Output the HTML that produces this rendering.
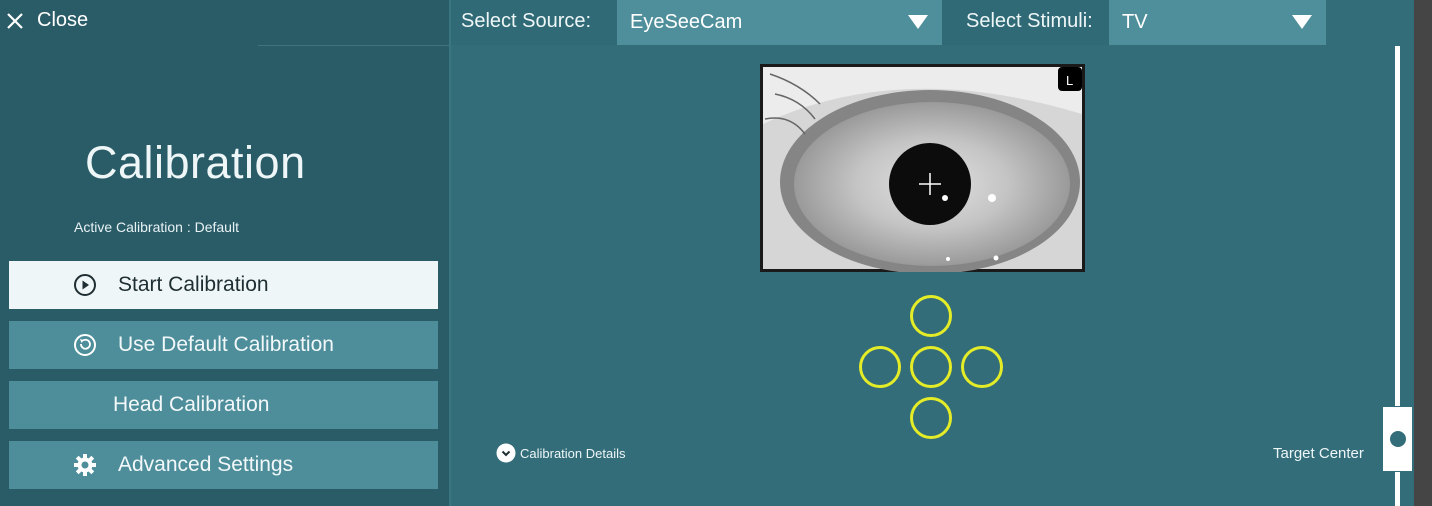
<!DOCTYPE html>
<html><head><meta charset="utf-8"><style>
*{margin:0;padding:0;box-sizing:border-box}
body{width:1432px;height:506px;overflow:hidden;background:#336d79;font-family:"Liberation Sans",sans-serif;position:relative;color:#fff}
.a{position:absolute}
.btn{position:absolute;left:9px;width:429px;height:48px;background:#4e8e9b;font-size:21px;color:#f2f8f9;line-height:48px}
.btn span{position:absolute;left:109px}
.btn svg{position:absolute;left:64px;top:12px}
.c{position:absolute;width:42px;height:42px;border:3px solid #e4ec28;border-radius:50%}
</style></head><body>
<div class="a" style="left:0;top:0;width:449px;height:506px;background:#2a5c68"></div>
<div class="a" style="left:449px;top:0;width:2px;height:506px;background:#3a7682"></div>
<div class="a" style="left:258px;top:45px;width:192px;height:1px;background:#3d7480"></div>
<svg class="a" style="left:7px;top:13px" width="16" height="16"><path d="M1 1L15 15M15 1L1 15" stroke="#fff" stroke-width="2.2"/></svg>
<div class="a" style="left:37px;top:9px;font-size:20px">Close</div>
<div class="a" style="left:85px;top:137px;font-size:45px;font-weight:300;color:#eef6f7;letter-spacing:0.5px">Calibration</div>
<div class="a" style="left:74px;top:219px;font-size:14px;color:#e8f2f4">Active Calibration : Default</div>
<div class="btn" style="top:261px;background:#eef6f7;color:#1e2e33"><svg width="24" height="24"><circle cx="12" cy="12" r="10" fill="none" stroke="#1e2e33" stroke-width="2"/><path d="M9.5 7.5L16 12L9.5 16.5Z" fill="#1e2e33"/></svg><span>Start Calibration</span></div>
<div class="btn" style="top:321px"><svg width="24" height="24"><circle cx="12" cy="12" r="10" fill="none" stroke="#fff" stroke-width="2"/><path d="M8 11A4.5 4.5 0 1 0 10 7.5" fill="none" stroke="#fff" stroke-width="1.8"/><path d="M7 6L11 7L8.5 10Z" fill="#fff"/></svg><span>Use Default Calibration</span></div>
<div class="btn" style="top:381px"><span style="left:104px">Head Calibration</span></div>
<div class="btn" style="top:441px"><svg width="24" height="24" viewBox="0 0 24 24"><g fill="#fff"><circle cx="12" cy="12" r="7.5"/><rect x="10" y="1" width="4" height="22"/><rect x="1" y="10" width="22" height="4"/><rect x="10" y="1" width="4" height="22" transform="rotate(45 12 12)"/><rect x="10" y="1" width="4" height="22" transform="rotate(-45 12 12)"/></g><circle cx="12" cy="12" r="3.5" fill="#4e8e9b"/></svg><span>Advanced Settings</span></div>

<div class="a" style="left:451px;top:0;width:166px;height:45px;background:#2f6a76"></div>
<div class="a" style="left:461px;top:10px;font-size:20px;color:#eef6f7">Select Source:</div>
<div class="a" style="left:617px;top:0;width:325px;height:45px;background:#4f8f9c"></div>
<div class="a" style="left:630px;top:11px;font-size:20px">EyeSeeCam</div>
<svg class="a" style="left:907px;top:14px" width="22" height="16"><path d="M1 1H21L11 15Z" fill="#fff"/></svg>
<div class="a" style="left:942px;top:0;width:167px;height:45px;background:#2f6a76"></div>
<div class="a" style="left:966px;top:10px;font-size:20px;color:#eef6f7">Select Stimuli:</div>
<div class="a" style="left:1109px;top:0;width:217px;height:45px;background:#4f8f9c"></div>
<div class="a" style="left:1122px;top:11px;font-size:20px">TV</div>
<svg class="a" style="left:1291px;top:14px" width="22" height="16"><path d="M1 1H21L11 15Z" fill="#fff"/></svg>
<div class="a" style="left:1414px;top:0;width:18px;height:506px;background:#454545"></div>

<svg class="a" style="left:760px;top:64px" width="325" height="208">
<defs><radialGradient id="ir" cx="50%" cy="50%" r="50%"><stop offset="0" stop-color="#e2e2e2"/><stop offset="0.55" stop-color="#c4c4c4"/><stop offset="1" stop-color="#9a9a9a"/></radialGradient></defs>
<rect width="325" height="208" fill="#1a1a1a"/>
<rect x="3" y="3" width="319" height="202" fill="#ececec"/>
<path d="M3 60Q140 -5 322 50V205H3Z" fill="#d6d6d6"/>
<ellipse cx="170" cy="118" rx="150" ry="92" fill="#858585"/>
<ellipse cx="172" cy="120" rx="138" ry="82" fill="url(#ir)"/>
<path d="M10 10Q40 20 60 40M15 30Q40 35 55 55M5 55Q30 50 45 70" stroke="#666" stroke-width="1.5" fill="none"/>
<circle cx="170" cy="120" r="41" fill="#0c0c0c"/>
<path d="M159 120H181M170 109V131" stroke="#fff" stroke-width="1.5"/>
<circle cx="185" cy="134" r="3" fill="#fff"/><circle cx="232" cy="134" r="4" fill="#fff"/>
<circle cx="188" cy="195" r="2" fill="#fff"/><circle cx="236" cy="194" r="2.5" fill="#fff"/>
<rect x="298" y="3" width="24" height="24" rx="4" fill="#000"/>
<text x="306" y="21" font-size="13" fill="#fff" font-family="Liberation Sans">L</text>
</svg>

<div class="c" style="left:910px;top:295px"></div>
<div class="c" style="left:859px;top:346px"></div>
<div class="c" style="left:910px;top:346px"></div>
<div class="c" style="left:961px;top:346px"></div>
<div class="c" style="left:910px;top:397px"></div>

<svg class="a" style="left:496px;top:443px" width="20" height="20"><circle cx="10" cy="10" r="9.5" fill="#fff"/><path d="M6.5 8.5L10 12L13.5 8.5" stroke="#1e2e33" stroke-width="2" fill="none"/></svg>
<div class="a" style="left:520px;top:446px;font-size:13px;color:#eef6f7">Calibration Details</div>
<div class="a" style="left:1273px;top:445px;font-size:15px;color:#eef6f7">Target Center</div>
<div class="a" style="left:1395px;top:46px;width:5px;height:460px;background:#fff"></div>
<div class="a" style="left:1382px;top:406px;width:31px;height:66px;background:#fff;border:1px solid #336d79"></div>
<div class="a" style="left:1390px;top:431px;width:16px;height:16px;border-radius:50%;background:#336d79"></div>
</body></html>
